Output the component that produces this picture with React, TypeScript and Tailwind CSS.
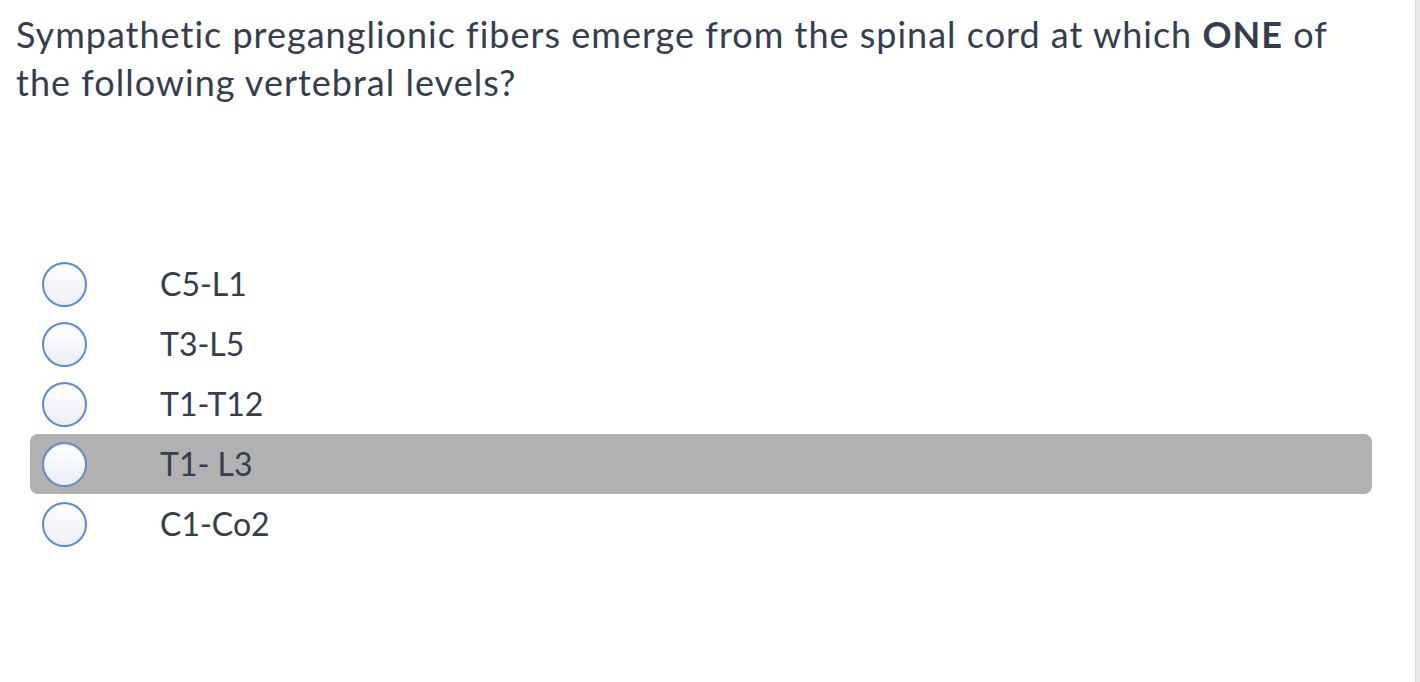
import React from "react";

const options = ["C5-L1", "T3-L5", "T1-T12", "T1- L3", "C1-Co2"];

function Radio() {
  return (
    <div className="w-[45px] h-[45px] rounded-full border-2 border-[#5f8bd2] bg-gradient-to-b from-[#ffffff] to-[#eceff5] shadow-[inset_0_1px_1px_rgba(0,0,0,0.08)]" />
  );
}

export default function App() {
  return (
    <div className="flex w-[1420px] h-[682px] bg-white overflow-hidden" style={{ fontFamily: "Lato, 'Open Sans', sans-serif" }}>
      <div className="flex-1 flex flex-col">
        <p className="pl-[16px] pt-[10px] text-[36px] leading-[48px] tracking-[1px] text-[#343e4f] whitespace-nowrap">
          Sympathetic preganglionic fibers emerge from the spinal cord at which <b className="font-bold">ONE</b> of
          <br />
          the following vertebral levels?
        </p>
        <div className="mt-[148px] flex flex-col ml-[30px] w-[1342px]">
          {options.map((o, i) => (
            <div
              key={o}
              className={
                "flex items-center h-[60px] pl-[12px] rounded-[8px] " +
                (i === 3 ? "bg-[#b1b1b1]" : "")
              }
            >
              <Radio />
              <span className="ml-[73px] text-[32px] text-[#343e4f]">{o}</span>
            </div>
          ))}
        </div>
      </div>
      <div className="w-[5px] h-full bg-[#e8e8e8] border-l border-[#dcdcdc]" />
    </div>
  );
}
